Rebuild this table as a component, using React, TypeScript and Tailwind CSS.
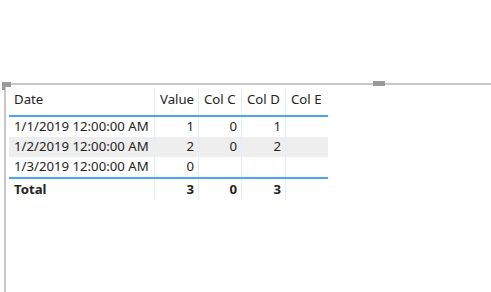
import React from "react";

const cols = ["Date", "Value", "Col C", "Col D", "Col E"];
const rows: string[][] = [
  ["1/1/2019 12:00:00 AM", "1", "0", "1", ""],
  ["1/2/2019 12:00:00 AM", "2", "0", "2", ""],
  ["1/3/2019 12:00:00 AM", "0", "", "", ""],
];
const total = ["Total", "3", "0", "3", ""];

function Cell({ text, idx, bold }: { text: string; idx: number; bold?: boolean }) {
  const sep = idx < 4 ? "border-r border-[#e4eefa]" : "";
  const align = idx === 0 ? "justify-start pl-[5px]" : "justify-end pr-[4px]";
  return (
    <div className={`flex items-center h-full ${align} ${sep} ${bold ? "font-bold" : ""}`}>
      {text}
    </div>
  );
}

export default function App() {
  const grid = "grid grid-cols-[146px_44px_43px_44px_42px]";
  return (
    <div
      className="w-[491px] h-[292px] bg-white relative overflow-hidden text-[#252423]"
      style={{ fontFamily: '"Noto Sans", "Open Sans", sans-serif' }}
    >
      <div className="absolute left-[2px] top-[82px] w-[9px] h-[5px] bg-[#9a9a9a]" />
      <div className="absolute left-[2px] top-[82px] w-[3px] h-[8px] bg-[#9a9a9a]" />
      <div className="absolute left-[373px] top-[81px] w-[12px] h-[5px] bg-[#9a9a9a]" />
      <div className="mt-[83px] ml-[4px] h-[209px] border-t-2 border-l-2 border-[#c8c8c8] pl-[3px] pt-[3px]">
        <div className="text-[13.2px] leading-none w-[319px]">
          <div className={`${grid} h-[29px] border-b-2 border-[#4ea6f2]`}>
            {cols.map((c, i) => (
              <div
                key={c}
                className={`flex items-center pl-[5px] pb-[3px] h-full ${i < 4 ? "border-r border-[#e4eefa]" : ""}`}
              >
                {c}
              </div>
            ))}
          </div>
          {rows.map((r, ri) => (
            <div key={ri} className={`${grid} h-[20px] ${ri === 1 ? "bg-[#eeeeee]" : ""}`}>
              {r.map((t, i) => (
                <Cell key={i} text={t} idx={i} />
              ))}
            </div>
          ))}
          <div className={`${grid} h-[23px] border-t-2 border-[#4ea6f2]`}>
            {total.map((t, i) => (
              <Cell key={i} text={t} idx={i} bold />
            ))}
          </div>
        </div>
      </div>
    </div>
  );
}
